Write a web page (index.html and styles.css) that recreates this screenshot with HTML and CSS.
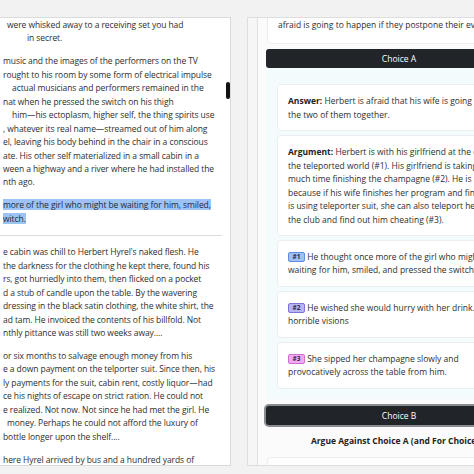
FILE: index.html
```html
<!DOCTYPE html>
<html>
<head>
<meta charset="utf-8">
<link rel="stylesheet" href="styles.css">
</head>
<body>
<div class="app">
  <section class="story">
    <div class="story-text">
      <p><span class="i1">were whisked away to a receiving set you had</span><br><span class="i6">in secret.</span></p>
      <p>music and the images of the performers on the TV<br>rought to his room by some form of electrical impulse<br><span class="i2">actual musicians and performers remained in the</span><br>nat when he pressed the switch on his thigh<br><span class="i2">him—his ectoplasm, higher self, the thing spirits use</span><br>, whatever its real name—streamed out of him along<br>el, leaving his body behind in the chair in a conscious<br>ate. His other self materialized in a small cabin in a<br>ween a highway and a river where he had installed the<br>nth ago.</p>
      <p><span class="sel">more of the girl who might be waiting for him, smiled,</span><br><span class="sel">witch.</span></p>
      <hr>
      <p>e cabin was chill to Herbert Hyrel's naked flesh. He<br>the darkness for the clothing he kept there, found his<br>rs, got hurriedly into them, then flicked on a pocket<br>d a stub of candle upon the table. By the wavering<br>dressing in the black satin clothing, the white shirt, the<br>ad tam. He invoiced the contents of his billfold. Not<br>nthly pittance was still two weeks away....</p>
      <p>or six months to salvage enough money from his<br>e a down payment on the telporter suit. Since then, his<br>ly payments for the suit, cabin rent, costly liquor—had<br>ce his nights of escape on strict ration. He could not<br>e realized. Not now. Not since he had met the girl. He<br><span class="i1">money. Perhaps he could not afford the luxury of</span><br>bottle longer upon the shelf....</p>
      <p>here Hyrel arrived by bus and a hundred yards of</p>
    </div>
    <div class="thumb"></div>
  </section>

  <section class="panel">
    <div class="panel-inner">
      <div class="stack">
        <div class="card question">Herbert is nervous and hurrying the girl. What is the thing that he is<br>afraid is going to happen if they postpone their evening together?</div>
        <div class="choice-bar">Choice A</div>
        <div class="choice-body">
          <div class="card"><b>Answer:</b> Herbert is afraid that his wife is going to catch<br>the two of them together.</div>
          <div class="card"><b>Argument:</b> Herbert is with his girlfriend at the club in<br>the teleported world (#1). His girlfriend is taking too<br>much time finishing the champagne (#2). He is nervous<br>because if his wife finishes her program and finds out he<br>is using teleporter suit, she can also teleport herself to<br>the club and find out him cheating (#3).</div>
          <div class="card"><span class="badge b1">#1</span> He thought once more of the girl who might be<br>waiting for him, smiled, and pressed the switch.</div>
          <div class="card"><span class="badge b2">#2</span> He wished she would hurry with her drink. He had<br>horrible visions</div>
          <div class="card"><span class="badge b3">#3</span> She sipped her champagne slowly and<br>provocatively across the table from him.</div>
        </div>
        <div class="choice-bar active">Choice B</div>
        <div class="argue">Argue Against Choice A (and For Choice B)</div>
        <div class="card blank"></div>
      </div>
    </div>
  </section>
</div>
</body>
</html>
```

FILE: styles.css
```css
html, body {
  margin: 0;
  padding: 0;
}
body {
  width: 474px;
  height: 474px;
  overflow: hidden;
  background: #f2f2f2;
  font-family: "Open Sans", "Noto Sans", sans-serif;
  font-size: 8.5px;
  line-height: 13.45px;
  color: #2e2e2e;
}
.app {
  display: flex;
  width: 580px;
  padding-top: 17px;
  height: 449px;
}
.story {
  position: relative;
  width: 230px;
  flex: none;
  background: #fff;
  border: 1px solid #dadada;
  border-left: none;
  overflow: hidden;
}
.story-text {
  padding: 0 14px 0 3px;
  letter-spacing: -0.08px;
}
.story-text p {
  margin: 0 0 9.5px;
  white-space: nowrap;
}
.i1 { padding-left: 4px; }
.i2 { padding-left: 9px; }
.i6 { padding-left: 24px; }
.sel {
  background: #9dc3f6;
  color: #1f2a3a;
}
.story-text hr {
  margin: 9.5px -6px 9.5px -4px;
  border: 0;
  border-top: 1px solid #dcdcdc;
}
.thumb {
  position: absolute;
  right: 0;
  top: 64px;
  width: 4px;
  height: 17px;
  border-radius: 2px;
  background: #111;
}
.panel {
  margin-left: 16px;
  width: 300px;
  flex: none;
  background: #f6f6f6;
  border: 1px solid #dedede;
  padding: 0 0 0 9px;
  overflow: hidden;
}
.panel-inner {
  height: 100%;
  background: #fbfbfb;
  border-left: 1px solid #e2e2e2;
  padding: 0 0 0 8px;
  overflow: hidden;
}
.stack {
  width: 266px;
  margin-top: -24px;
}
.card {
  background: #fff;
  border: 1px solid #ebeef0;
  border-radius: 4px;
  padding: 9px 10px;
  white-space: nowrap;
  overflow: hidden;
}
.card b {
  color: #222;
}
.question {
  margin-left: 1px;
  padding-top: 9.5px;
  padding-bottom: 12px;
  margin-bottom: 5px;
}
.choice-bar {
  height: 19px;
  background: #212529;
  color: #fff;
  border-radius: 3px;
  display: flex;
  align-items: center;
  justify-content: center;
}
.choice-bar.active {
  margin-top: 7px;
  box-shadow: 0 0 0 2px #8a8c8f;
}
.choice-body {
  background: #f3fbfd;
  padding: 16px 11px 6px;
}
.choice-body .card {
  margin-bottom: 4px;
}
.badge {
  display: inline-block;
  font-size: 6.5px;
  line-height: 8px;
  font-weight: 700;
  padding: 0 3.5px;
  border-radius: 2px;
  color: #2a2a4a;
  vertical-align: 1px;
}
.b1 { background: #9fbff5; border: 1px solid #5f8ee0; }
.b2 { background: #b8b3f3; border: 1px solid #7c74d8; }
.b3 { background: #f3a8f3; border: 1px solid #cc6fd0; }
.argue {
  text-align: center;
  font-weight: 700;
  color: #222;
  margin: 9.5px 0 9px;
}
.blank {
  height: 40px;
  margin-left: 1px;
}
```
